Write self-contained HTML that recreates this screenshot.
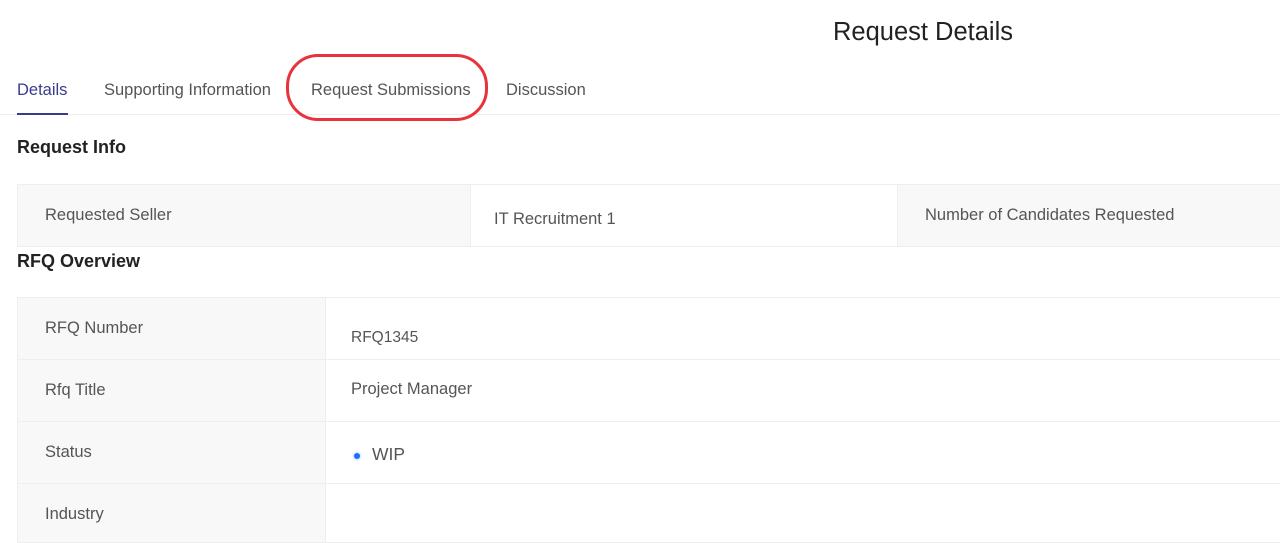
<!DOCTYPE html>
<html><head><meta charset="utf-8"><style>
body{margin:0;width:1280px;height:540px;overflow:hidden;background:#fff;font-family:"Liberation Sans",sans-serif;position:relative;color:#333}
.a{position:absolute;white-space:nowrap}
.tab{font-size:16.5px;color:#555;top:81px}
.h{font-size:18px;font-weight:bold;color:#222}
.cell{position:absolute;box-sizing:border-box;border:1px solid #eee}
.g{background:#f8f8f8}
.lbl{font-size:16.5px;color:#555}
.val{font-size:16.5px;color:#555}
</style></head><body>
<div class="a" style="left:833px;top:18px;font-size:25.5px;color:#222">Request Details</div>
<div class="a tab" style="left:17px;color:#3b3b8e">Details</div>
<div class="a tab" style="left:104px">Supporting Information</div>
<div class="a tab" style="left:311px">Request Submissions</div>
<div class="a tab" style="left:506px">Discussion</div>
<div class="a" style="left:0;top:114px;width:1280px;height:1px;background:#eee"></div>
<div class="a" style="left:17px;top:113px;width:51px;height:2px;background:#3b3b8e"></div>
<div class="a" style="left:286px;top:54px;width:196px;height:61px;border:3px solid #e8333c;border-radius:32px"></div>
<div class="a h" style="left:17px;top:137px">Request Info</div>
<div class="cell g" style="left:17px;top:184px;width:454px;height:63px"></div>
<div class="cell" style="left:470px;top:184px;width:428px;height:63px"></div>
<div class="cell g" style="left:897px;top:184px;width:390px;height:63px"></div>
<div class="a lbl" style="left:45px;top:206px">Requested Seller</div>
<div class="a val" style="left:494px;top:210px">IT Recruitment 1</div>
<div class="a lbl" style="left:925px;top:206px">Number of Candidates Requested</div>
<div class="a h" style="left:17px;top:251px">RFQ Overview</div>
<div class="cell g" style="left:17px;top:297px;width:309px;height:63px"></div>
<div class="cell" style="left:325px;top:297px;width:960px;height:63px"></div>
<div class="cell g" style="left:17px;top:359px;width:309px;height:63px"></div>
<div class="cell" style="left:325px;top:359px;width:960px;height:63px"></div>
<div class="cell g" style="left:17px;top:421px;width:309px;height:63px"></div>
<div class="cell" style="left:325px;top:421px;width:960px;height:63px"></div>
<div class="cell g" style="left:17px;top:483px;width:309px;height:60px"></div>
<div class="cell" style="left:325px;top:483px;width:960px;height:60px"></div>
<div class="a lbl" style="left:45px;top:319px">RFQ Number</div>
<div class="a val" style="left:351px;top:329px;font-size:15.5px">RFQ1345</div>
<div class="a lbl" style="left:45px;top:381px">Rfq Title</div>
<div class="a val" style="left:351px;top:380px">Project Manager</div>
<div class="a lbl" style="left:45px;top:443px">Status</div>
<div class="a" style="left:354px;top:453px;width:6px;height:6px;border-radius:50%;background:#1e6fff;box-shadow:0 0 3px #8fb5ff"></div>
<div class="a val" style="left:372px;top:444px;font-size:17.5px">WIP</div>
<div class="a lbl" style="left:45px;top:505px">Industry</div>
</body></html>
